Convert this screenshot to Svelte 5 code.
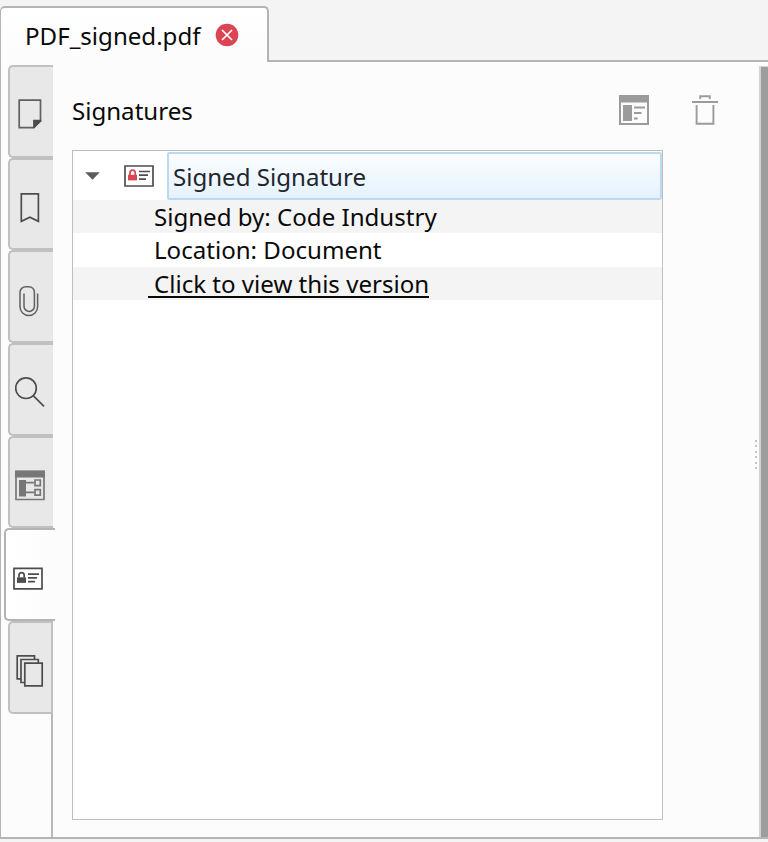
<script lang="ts">
	type Panel = 'comments' | 'bookmarks' | 'attachments' | 'search' | 'objects' | 'signatures' | 'pages';

	const panels: Panel[] = [
		'comments',
		'bookmarks',
		'attachments',
		'search',
		'objects',
		'signatures',
		'pages'
	];

	let active = $state<Panel>('signatures');
	let expanded = $state(true);
</script>

<div class="window">
	<header class="tab-bar">
		<div class="file-tab">
			<span class="file-name">PDF_signed.pdf</span>
			<button class="close" aria-label="Close">
				<svg width="24" height="24" viewBox="0 0 24 24">
					<circle cx="12" cy="12" r="11.3" fill="#da4453" />
					<path d="M7 7l10 10M17 7L7 17" stroke="#fff" stroke-width="1.7" />
				</svg>
			</button>
		</div>
		<div class="tab-rest"></div>
	</header>

	<div class="body">
		<nav class="rail">
			{#each panels as panel}
				<button
					class="rail-tab"
					class:active={panel === active}
					aria-label={panel}
					onclick={() => (active = panel)}
				>
					<svg width="30" height="32" viewBox="0 0 30 32" fill="none" stroke="#4d4d4d" stroke-width="1.7">
						{#if panel === 'comments'}
							<path d="M4.2 1.2h21.3v20.5l-7 7H4.2z" stroke="#606060" />
							<path d="M18.1 20.7h8.2v1.6l-7 7h-1.2z" fill="#4d4d4d" stroke="none" />
						{:else if panel === 'bookmarks'}
							<path d="M6.3 1.8h17.1v27.5l-8.5-4.1-8.6 4.1z" />
						{:else if panel === 'attachments'}
							<path
								d="M9 8.5v12.7a5.2 5.2 0 0 0 10.4 0V7.2a5.5 5.5 0 0 0-5.5-5.5h-3.1A5.8 5.8 0 0 0 5 7.5v14.3a8.8 8.8 0 0 0 17.6 0V8.5"
								stroke="#606060"
								stroke-width="1.5"
							/>
						{:else if panel === 'search'}
							<circle cx="11" cy="11.2" r="10.3" />
							<path d="M18.2 18.6L29 29.4" />
						{:else if panel === 'objects'}
							<path d="M1 1.5h28v28H1z" stroke="#777" />
							<path d="M0 .5h30v7H0zM4 10h7v16.5H4z" fill="#777" stroke="none" />
							<path d="M11 12.7h8M11 22.4h8M20 10h5.3v5.6H20zM20 19.6h5.3v5.6H20z" stroke="#777" />
						{:else if panel === 'signatures'}
							<path d="M1 5.3h28v20.6H1z" />
							<path d="M4 14.3h9v5.6H4z" fill="#4d4d4d" stroke="none" />
							<path d="M6 14.5v-2a2.6 2.9 0 0 1 5.2 0v2M15 11.2h11M15 14.9h9M15 18.7h7" />
						{:else}
							<path d="M6.2 23.8H2.2V.9h17.3v3.5" />
							<path d="M10 27.5H6V4.5h17.3v3.5" />
							<path d="M9.8 8.2h17.4v22.7H9.8z" />
						{/if}
					</svg>
				</button>
			{/each}
			<div class="rail-rest"></div>
		</nav>

		<main class="panel">
			<div class="panel-head">
				<h1>Signatures</h1>
				<div class="tools">
					<button aria-label="Properties">
						<svg width="30" height="30" viewBox="0 0 30 30">
							<path d="M1 1h28v28H1z" fill="none" stroke="#9b9b9b" stroke-width="2" />
							<path d="M0 0h30v7.5H0zM4 10h9v16H4z" fill="#9b9b9b" />
							<path d="M15 12.5h11M15 18h7.5M15 23.5h3.7" stroke="#9b9b9b" stroke-width="1.8" />
						</svg>
					</button>
					<button aria-label="Delete">
						<svg width="26" height="30" viewBox="0 0 26 30" fill="none" stroke="#9b9b9b" stroke-width="1.9">
							<path d="M0 7h26M8.2 4V1.2h9.6V4M4.6 10v18.7h16.8V10" />
						</svg>
					</button>
				</div>
			</div>

			<div class="tree">
				<div class="node">
					<button class="toggle" aria-label="Toggle" onclick={() => (expanded = !expanded)}>
						<svg width="15" height="8" viewBox="0 0 15 8"><path d="M.2 .2h14.6L7.5 7.7z" fill="#5c5c5c" /></svg>
					</button>
					<svg class="card" width="30" height="22" viewBox="0 0 30 22" fill="none" stroke="#4d4d4d" stroke-width="1.7">
						<path d="M1 1h28v20H1z" />
						<path d="M4 9.8h9v5.6H4z" fill="#da4453" stroke="none" />
						<path d="M6 10V8a2.6 2.9 0 0 1 5.2 0v2" stroke="#da4453" />
						<path d="M15 6.5h11M15 10.2h9M15 14.1h7" />
					</svg>
					<div class="selected">Signed Signature</div>
				</div>
				{#if expanded}
					<div class="leaf">Signed by: Code Industry</div>
					<div class="leaf">Location: Document</div>
					<div class="leaf"><a href="#version">Click to view this version</a></div>
				{/if}
			</div>
		</main>

		<div class="splitter">
			{#each Array(6) as _}
				<i></i>
			{/each}
		</div>
		<div class="canvas"></div>
	</div>
</div>

<style>
	:global(body) {
		background: #f4f4f4;
	}

	.window {
		display: flex;
		flex-direction: column;
		box-sizing: border-box;
		height: 842px;
		padding: 6px 0 3px;
		font-family: 'Noto Sans', sans-serif;
		font-size: 24.08px;
		color: #0a0a0a;
		overflow: hidden;
	}

	button {
		padding: 0;
		border: 0;
		background: none;
		font: inherit;
	}

	svg {
		display: block;
	}

	.tab-bar {
		display: flex;
		height: 56px;
		flex: none;
	}

	.file-tab {
		display: flex;
		align-items: center;
		gap: 14px;
		box-sizing: border-box;
		width: 269px;
		padding: 0 0 0 24px;
		border: 2px solid #b4b4b4;
		border-bottom: 0;
		border-left-width: 1px;
		border-radius: 5px 5px 0 0;
		background: linear-gradient(#fff, #fcfcfc);
	}

	.file-name {
		white-space: nowrap;
	}

	.tab-rest {
		flex: 1;
		border-bottom: 2px solid #b4b4b4;
		box-sizing: border-box;
	}

	.body {
		display: flex;
		flex: 1;
		min-height: 0;
		border-left: 1px solid #b4b4b4;
		border-bottom: 2px solid #b4b4b4;
		background: #fcfcfc;
	}

	.rail {
		display: flex;
		flex-direction: column;
		width: 54px;
		padding-top: 3px;
	}

	.rail-tab {
		box-sizing: border-box;
		height: 92.7px;
		flex: none;
		margin: 0 2px 0 7px;
		padding: 8px 0 0 5px;
		border: 2px solid #c0c0c0;
		border-right: 0;
		border-radius: 5px 0 0 5px;
		background: #e8e8e8;
	}

	.rail-tab.active {
		margin: 0 0 0 3px;
		padding-left: 7px;
		border-color: #b4b4b4;
		background: linear-gradient(90deg, #fff, #fcfcfc);
	}

	.rail-tab.active + .rail-tab,
	.rail-rest {
		border-right: 2px solid #b8b8b8;
		margin-right: 2px;
	}

	.rail-tab.active + .rail-tab {
		border-right-color: #c0c0c0;
	}

	.rail-rest {
		flex: 1;
	}

	.panel {
		display: flex;
		flex-direction: column;
		width: 591px;
		padding: 0 0 17px 17px;
	}

	.panel-head {
		display: flex;
		align-items: center;
		height: 88px;
		flex: none;
	}

	h1 {
		margin: 9px 0 0;
		font-size: inherit;
		font-weight: 400;
		flex: 1;
	}

	.tools {
		display: flex;
		gap: 43px;
		margin: 7px -55px 0 0;
	}

	.tree {
		flex: 1;
		border: 1px solid #bfbfbf;
		background: #fff;
	}

	.node {
		display: flex;
		align-items: center;
		height: 49px;
	}

	.toggle {
		margin-left: 12px;
	}

	.card {
		margin: 0 13px 0 24px;
	}

	.selected {
		flex: 1;
		box-sizing: border-box;
		height: 48px;
		padding-left: 4px;
		border: 2px solid #bbdaf0;
		border-radius: 2px;
		background: linear-gradient(#fafdff, #e5f2fd);
		line-height: 45px;
		color: #1f262b;
	}

	.leaf {
		height: 33.4px;
		padding-left: 81px;
		line-height: 34px;
	}

	.leaf:nth-child(even) {
		background: #f4f4f4;
	}

	.leaf a {
		display: inline-block;
		height: 29px;
		margin-left: -6px;
		padding-left: 6px;
		border-bottom: 2px solid #0a0a0a;
		color: inherit;
		text-decoration: none;
	}

	.splitter {
		display: flex;
		flex-direction: column;
		justify-content: center;
		align-items: flex-end;
		gap: 3.6px;
		flex: 1;
		padding: 10px 2px 0 0;
	}

	.splitter i {
		width: 2px;
		height: 2px;
		background: #c4c4c4;
	}

	.canvas {
		width: 7px;
		margin-top: 4px;
		border: 2px solid #d2d2d2;
		border-width: 1px 0 0 2px;
		background: #9d9d9d;
	}
</style>
